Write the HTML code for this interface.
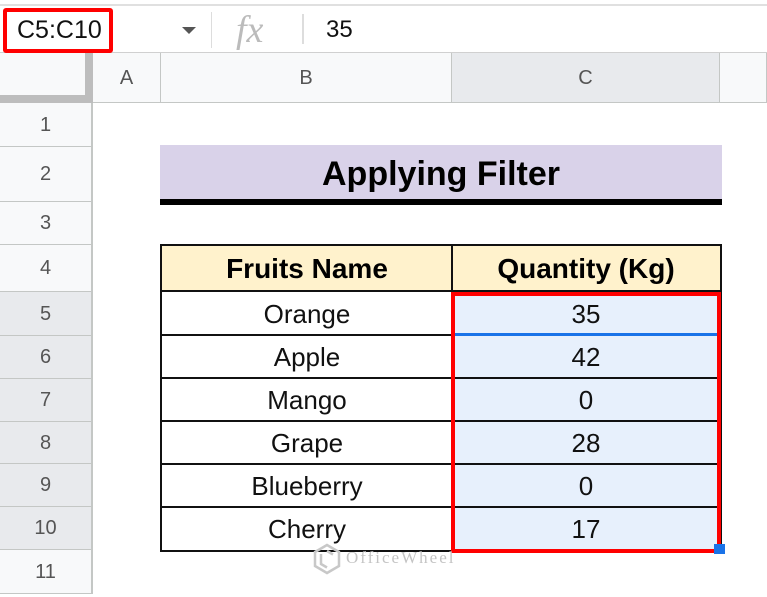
<!DOCTYPE html>
<html><head><style>
*{margin:0;padding:0;box-sizing:border-box}
body{width:767px;height:597px;overflow:hidden;background:#fff;font-family:"Liberation Sans",Arial,sans-serif;position:relative}
.a{position:absolute}
.rh{position:absolute;left:0;width:93px;background:#f8f9fa;border-bottom:1px solid #c4c7c5;border-right:2px solid #c4c7c5;color:#555;font-size:20px;text-align:center}
.rh.s{background:#e8eaed}
.ch{position:absolute;top:53px;height:50px;background:#f8f9fa;border-right:1px solid #c4c7c5;border-bottom:1px solid #c4c7c5;color:#555;font-size:20px;text-align:center;line-height:50px}
.c{position:absolute;text-align:center;font-size:26px;color:#111;border-bottom:2px solid #111}
</style></head><body>
<div class="a" style="left:0;top:4px;width:767px;height:2px;background:#e0e0e0"></div>
<div class="a" style="left:0;top:52px;width:767px;height:1px;background:#d0d0d0"></div>
<div class="a" style="left:3px;top:8px;width:110px;height:45px;border:4px solid #f00;border-radius:3px;font-size:25px;line-height:37px;padding-left:10px;color:#111">C5:C10</div>
<div class="a" style="left:182px;top:27px;width:0;height:0;border-left:7px solid transparent;border-right:7px solid transparent;border-top:7px solid #555"></div>
<div class="a" style="left:211px;top:12px;width:1px;height:36px;background:#ddd"></div>
<div class="a" style="left:236px;top:8px;font-family:'Liberation Serif',serif;font-style:italic;font-size:38px;color:#bbb">fx</div>
<div class="a" style="left:302px;top:14px;width:2px;height:30px;background:#ddd"></div>
<div class="a" style="left:326px;top:16px;font-size:24px;color:#111">35</div>
<div class="a" style="left:0;top:53px;width:93px;height:50px;background:#f8f9fa;border-right:8px solid #bdbdbd;border-bottom:8px solid #bdbdbd"></div>
<div class="ch" style="left:93px;width:68px">A</div>
<div class="ch" style="left:161px;width:291px">B</div>
<div class="ch" style="left:452px;width:268px;background:#e8eaed">C</div>
<div class="ch" style="left:720px;width:47px"></div>
<div class="rh" style="top:103px;height:44px;line-height:44px">1</div>
<div class="rh" style="top:147px;height:55px;line-height:55px">2</div>
<div class="rh" style="top:202px;height:43px;line-height:43px">3</div>
<div class="rh" style="top:245px;height:47px;line-height:47px">4</div>
<div class="rh s" style="top:292px;height:44px;line-height:44px">5</div>
<div class="rh s" style="top:336px;height:43px;line-height:43px">6</div>
<div class="rh s" style="top:379px;height:43px;line-height:43px">7</div>
<div class="rh s" style="top:422px;height:42px;line-height:42px">8</div>
<div class="rh s" style="top:464px;height:43px;line-height:43px">9</div>
<div class="rh s" style="top:507px;height:43px;line-height:43px">10</div>
<div class="rh" style="top:550px;height:44px;line-height:44px">11</div>
<div class="a" style="left:160px;top:145px;width:562px;height:60px;background:#d9d2e9;border-bottom:6px solid #000;font-weight:bold;font-size:34px;text-align:center;line-height:58px;color:#000">Applying Filter</div>
<div class="a" style="left:160px;top:244px;width:562px;height:308px;border:2px solid #111"></div>
<div class="a" style="left:162px;top:246px;width:558px;height:46px;background:#fff2cc;border-bottom:2px solid #111"></div>
<div class="a" style="left:451px;top:246px;width:2px;height:46px;background:#111"></div>
<div class="a" style="left:162px;top:248px;width:290px;text-align:center;font-weight:bold;font-size:28px;line-height:42px">Fruits Name</div>
<div class="a" style="left:452px;top:248px;width:268px;text-align:center;font-weight:bold;font-size:28px;line-height:42px">Quantity (Kg)</div>
<div class="a" style="left:453px;top:293px;width:267px;height:258px;background:#e7f0fc"></div>
<div class="c" style="left:162px;top:293px;width:290px;height:43px;line-height:43px">Orange</div>
<div class="c" style="left:162px;top:336px;width:290px;height:43px;line-height:43px">Apple</div>
<div class="c" style="left:162px;top:379px;width:290px;height:43px;line-height:43px">Mango</div>
<div class="c" style="left:162px;top:422px;width:290px;height:43px;line-height:43px">Grape</div>
<div class="c" style="left:162px;top:465px;width:290px;height:43px;line-height:43px">Blueberry</div>
<div class="c" style="left:162px;top:508px;width:290px;height:43px;line-height:43px;border:none">Cherry</div>
<div class="c" style="left:452px;top:293px;width:268px;height:43px;line-height:43px;border-color:#1a73e8;border-width:3px">35</div>
<div class="c" style="left:452px;top:336px;width:268px;height:43px;line-height:43px">42</div>
<div class="c" style="left:452px;top:379px;width:268px;height:43px;line-height:43px">0</div>
<div class="c" style="left:452px;top:422px;width:268px;height:43px;line-height:43px">28</div>
<div class="c" style="left:452px;top:465px;width:268px;height:43px;line-height:43px">0</div>
<div class="c" style="left:452px;top:508px;width:268px;height:43px;line-height:43px;border:none">17</div>
<div class="a" style="left:451px;top:292px;width:270px;height:261px;border:4px solid #f00"></div>
<div class="a" style="left:714px;top:544px;width:11px;height:10px;background:#1a73e8"></div>
<svg class="a" style="left:312px;top:543px" width="30" height="32" viewBox="0 0 30 32"><path d="M15 2 L27 9 V23 L15 30 L3 23 V9 Z M15 8 L21 11.5 M9 11 V21 L15 24.5" fill="none" stroke="#c8c8c8" stroke-width="2.5"/></svg>
<div class="a" style="left:346px;top:548px;font-family:'Liberation Serif',serif;font-size:17px;letter-spacing:2px;color:#c4c4c4">OfficeWheel</div>
</body></html>
